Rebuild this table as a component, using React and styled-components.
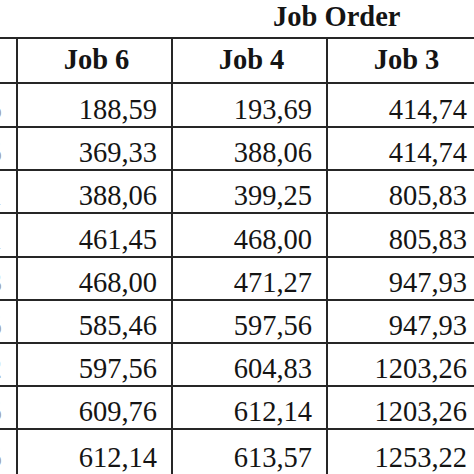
import React from "react"
import styled, { createGlobalStyle } from "styled-components"

const GlobalStyle = createGlobalStyle`
  html, body {
    margin: 0;
    padding: 0;
    background: #ffffff;
    overflow: hidden;
  }
`

const jobs = ["Job 6", "Job 4", "Job 3"]

// row heights follow the ruling of the scanned table
const rows = [
  { h: 44, v: ["150,55", "188,59", "193,69", "414,74"] },
  { h: 43, v: ["301,55", "369,33", "388,06", "414,74"] },
  { h: 43, v: ["310,41", "388,06", "399,25", "805,83"] },
  { h: 44, v: ["360,01", "461,45", "468,00", "805,83"] },
  { h: 43, v: ["388,03", "468,00", "471,27", "947,93"] },
  { h: 43, v: ["465,25", "585,46", "597,56", "947,93"] },
  { h: 43, v: ["470,32", "597,56", "604,83", "1203,26"] },
  { h: 43, v: ["580,55", "609,76", "612,14", "1203,26"] },
  { h: 46, v: ["596,55", "612,14", "613,57", "1253,22"] },
]

const App = () => {
  return (
    <Frame>
      <GlobalStyle />
      <Sheet>
        <colgroup>
          <FirstCol />
          <JobCol />
          <JobCol />
          <JobCol />
          <JobCol />
        </colgroup>
        <tbody>
          <TitleRow>
            <BlankCell />
            <TitleCell colSpan={4}>Job Order</TitleCell>
          </TitleRow>
          <HeadRow>
            <HeadCell>Tasks</HeadCell>
            {jobs.map((j) => (
              <HeadCell key={j}>{j}</HeadCell>
            ))}
            <HeadCell>Job 5</HeadCell>
          </HeadRow>
          {rows.map((r, i) => (
            <DataRow key={i} $h={r.h}>
              {r.v.map((v, k) => (
                <NumCell key={k} $edge={k === 0}>
                  {v}
                </NumCell>
              ))}
              <NumCell>1300,10</NumCell>
            </DataRow>
          ))}
        </tbody>
      </Sheet>
    </Frame>
  )
}

export default App

const Frame = styled.div`
  width: 474px;
  height: 474px;
  overflow: hidden;
  background: #fff;
`

const Sheet = styled.table`
  border-collapse: collapse;
  table-layout: fixed;
  width: 771px;
  margin-left: -135px;
  font-family: "Liberation Serif", "Times New Roman", serif;
  color: #141414;
`

const FirstCol = styled.col`
  width: 151px;
`

const JobCol = styled.col`
  width: 155px;
`

const TitleRow = styled.tr`
  height: 38px;
`

const BlankCell = styled.td`
  padding: 0;
`

const TitleCell = styled.td`
  padding: 1px 0 0 256px;
  vertical-align: top;
  text-align: left;
  font-size: 28.5px;
  font-weight: 700;
  line-height: 32px;
`

const HeadRow = styled.tr`
  height: 45px;
`

const HeadCell = styled.td`
  border: 2px solid #262626;
  padding: 0 0 2px 4px;
  text-align: center;
  vertical-align: middle;
  font-size: 28.5px;
  font-weight: 700;
  line-height: 32px;
`

const DataRow = styled.tr`
  height: ${(p) => p.$h}px;
`

const NumCell = styled.td`
  border: 2px solid #262626;
  padding: 0 14px 2px 0;
  text-align: right;
  vertical-align: bottom;
  font-size: 28.5px;
  line-height: 28px;
  color: ${(p) => (p.$edge ? "#a0a0a0" : "#141414")};
`
